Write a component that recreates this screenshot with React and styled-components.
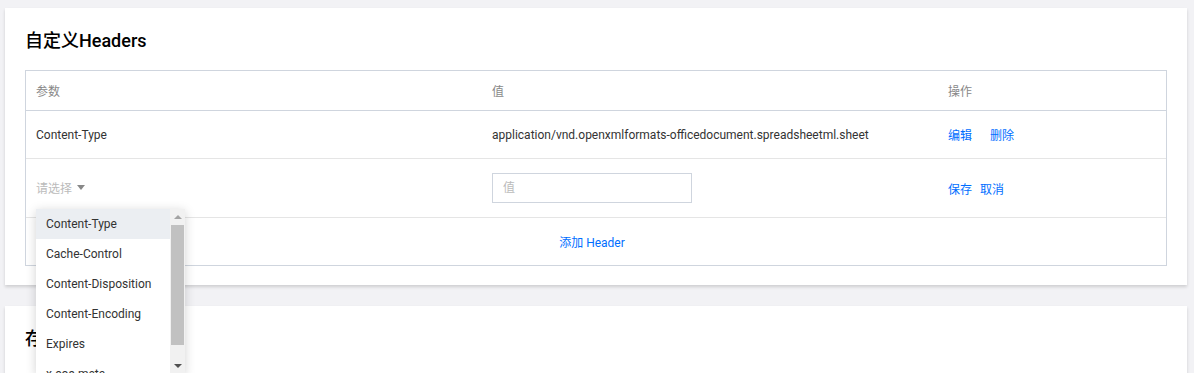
import React from 'react';
import styled, { createGlobalStyle } from 'styled-components';

const GlobalStyle = createGlobalStyle`
  html, body {
    margin: 0;
    padding: 0;
    background: #f2f2f5;
    font-family: Roboto, "Noto Sans CJK SC", sans-serif;
    font-size: 12px;
    color: #333;
    overflow: hidden;
  }
`;

const Page = styled.div`
  padding: 8px 7px 0 5px;
  display: flex;
  flex-direction: column;
  gap: 21px;
  height: 373px;
  box-sizing: border-box;
`;

const Card = styled.div`
  background: #fff;
  box-shadow: 0 2px 3px rgba(0, 0, 0, 0.15);
  padding: 20px 20px 19px 20px;
  flex-shrink: 0;
`;

const Title = styled.h2`
  margin: 2px 0 18px;
  font-size: 18px;
  line-height: 22px;
  font-weight: 500;
  color: #000;
`;

const Table = styled.div`
  border: 1px solid #cfd5de;
`;

const Row = styled.div`
  display: grid;
  grid-template-columns: 40% 40% 20%;
  align-items: center;
  height: ${(p) => p.$h}px;
  border-bottom: 1px solid ${(p) => (p.$head ? '#cfd5de' : '#e5e5e5')};
`;

const Cell = styled.div`
  padding: 0 10px;
  color: ${(p) => (p.$muted ? '#888' : '#333')};
  position: relative;
`;

const Link = styled.a`
  color: #006eff;
  text-decoration: none;
  margin-right: ${(p) => p.$gap ?? 8}px;
  cursor: pointer;
`;

const AddRow = styled.div`
  height: 47px;
  display: flex;
  align-items: center;
  justify-content: center;
  padding-right: 8px;
`;

const Select = styled.div`
  display: inline-flex;
  align-items: center;
  gap: 5px;
  color: #bbb;
  margin-top: -2px;
`;

const Caret = styled.span`
  width: 0;
  height: 0;
  border-left: 4px solid transparent;
  border-right: 4px solid transparent;
  border-top: 5px solid #888;
`;

const Input = styled.input`
  width: 200px;
  height: 30px;
  box-sizing: border-box;
  border: 1px solid #cfd5de;
  padding: 0 10px;
  font-family: inherit;
  font-size: 12px;
  outline: none;
  &::placeholder {
    color: #bbb;
  }
`;

const Dropdown = styled.div`
  position: absolute;
  left: 10px;
  top: 28px;
  width: 149px;
  height: 165px;
  background: #fff;
  box-shadow: 0 2px 10px rgba(0, 0, 0, 0.18);
  display: flex;
  z-index: 10;
  overflow: hidden;
`;

const List = styled.ul`
  list-style: none;
  margin: 0;
  padding: 0;
  flex: 1;
`;

const Item = styled.li`
  height: 30px;
  line-height: 30px;
  padding: 0 10px;
  color: #333;
  background: ${(p) => (p.$active ? '#ebeef2' : '#fff')};
  white-space: nowrap;
`;

const Scrollbar = styled.div`
  width: 15px;
  background: #f1f1f1;
  display: flex;
  flex-direction: column;
  align-items: center;
`;

const Arrow = styled.span`
  width: 0;
  height: 0;
  margin: 6px 0;
  border-left: 4px solid transparent;
  border-right: 4px solid transparent;
  ${(p) => (p.$up ? 'border-bottom: 4px solid #a3a3a3;' : 'border-top: 4px solid #505050;')}
`;

const Thumb = styled.div`
  width: 13px;
  height: 120px;
  background: #c1c1c1;
`;

const Spacer = styled.div`
  flex: 1;
`;

const SecondCard = styled(Card)`
  flex: 1;
`;

const options = [
  'Content-Type',
  'Cache-Control',
  'Content-Disposition',
  'Content-Encoding',
  'Expires',
  'x-cos-meta-',
];

export default function App() {
  return (
    <>
      <GlobalStyle />
      <Page>
        <Card>
          <Title>自定义Headers</Title>
          <Table>
            <Row $h={39} $head>
              <Cell $muted>参数</Cell>
              <Cell $muted>值</Cell>
              <Cell $muted>操作</Cell>
            </Row>
            <Row $h={47}>
              <Cell>Content-Type</Cell>
              <Cell>application/vnd.openxmlformats-officedocument.spreadsheetml.sheet</Cell>
              <Cell>
                <Link $gap={18}>编辑</Link>
                <Link>删除</Link>
              </Cell>
            </Row>
            <Row $h={58}>
              <Cell>
                <Select>
                  请选择 <Caret />
                </Select>
                <Dropdown>
                  <List>
                    {options.map((o, i) => (
                      <Item key={o} $active={i === 0}>
                        {o}
                      </Item>
                    ))}
                  </List>
                  <Scrollbar>
                    <Arrow $up />
                    <Thumb />
                    <Spacer />
                    <Arrow />
                  </Scrollbar>
                </Dropdown>
              </Cell>
              <Cell>
                <Input placeholder="值" />
              </Cell>
              <Cell>
                <Link>保存</Link>
                <Link>取消</Link>
              </Cell>
            </Row>
            <AddRow>
              <Link $gap={0}>添加 Header</Link>
            </AddRow>
          </Table>
        </Card>
        <SecondCard>
          <Title>存储</Title>
        </SecondCard>
      </Page>
    </>
  );
}
